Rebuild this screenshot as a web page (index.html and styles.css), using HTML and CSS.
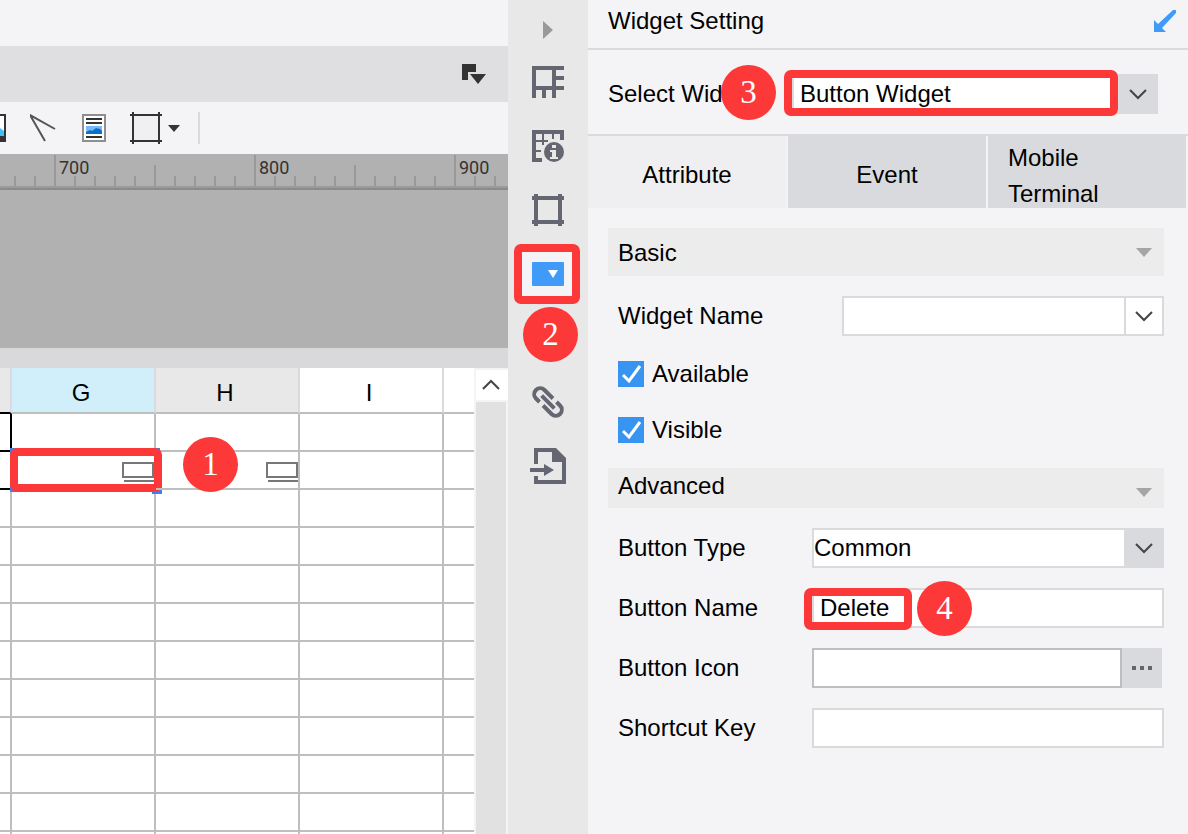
FILE: index.html
```html
<!DOCTYPE html>
<html lang="en">
<head>
    <meta charset="UTF-8">
    <meta name="viewport" content="width=device-width, initial-scale=1.0">
    <title>Widget Setting</title>
    <link rel="stylesheet" href="styles.css">
</head>
<body>
    <main class="designer">
        <div class="titlebar"></div>
        <div class="tabstrip">
            <button class="plain" aria-label="Open templates">
                <svg width="24" height="22" fill="#333"><path d="M0 1H14V9H6V17H0Z"/><path d="M8 11H24L16 21Z"/></svg>
            </button>
        </div>
        <div class="toolbar">
            <button class="plain" aria-label="Insert picture">
                <svg width="6" height="28"><path fill="#fff" d="M0 0H6V28H0Z"/><path fill="#40bfff" d="M0 14L4 17V22H0Z"/><path fill="#333" d="M0 0H6V28H0V22H4V2H0Z"/></svg>
            </button>
            <button class="plain" aria-label="Slope line">
                <svg width="28" height="28" fill="none" stroke="#555" stroke-width="2"><path d="M25 15L0 1L15 27"/></svg>
            </button>
            <button class="plain" aria-label="Rich text">
                <svg width="24" height="28"><path fill="#fff" stroke="#8f8f8f" stroke-width="2" d="M1 1H23V27H1Z"/><path fill="#333" d="M4 4H20V6H4ZM4 8H20V10H4ZM4 22H20V24H4Z"/><path fill="#74b9ff" d="M4 12H20V20H4Z"/><path fill="#0b70c4" d="M4 18L8 16L10 17L14 14L18 15L20 17V20H4Z"/></svg>
            </button>
            <button class="plain" aria-label="Border">
                <svg width="52" height="32" fill="none" stroke="#333" stroke-width="2"><path fill="#f0f0f2" stroke="none" d="M4 4H28V28H4Z"/><path d="M0 3H32M0 29H32M3 0V32M29 0V32"/><path fill="#333" stroke="none" d="M38 13H50L44 20Z"/></svg>
            </button>
            <span class="separator"></span>
        </div>
        <svg class="ruler" width="100%" height="36" aria-label="Ruler">
            <defs>
                <pattern id="ticks" x="54" width="200" height="36" patternUnits="userSpaceOnUse">
                    <path fill="#999" d="M0 1h2v31h-2zM20 22h2v10h-2zM40 22h2v10h-2zM60 22h2v10h-2zM80 22h2v10h-2zM100 11h2v21h-2zM120 22h2v10h-2zM140 22h2v10h-2zM160 22h2v10h-2zM180 22h2v10h-2z"/>
                </pattern>
            </defs>
            <rect width="100%" height="32" fill="url(#ticks)"/>
            <rect y="32" width="100%" height="2" fill="#9b9b9b"/>
            <rect y="34" width="100%" height="2" fill="#8b8b8b"/>
            <text x="59" y="20">700</text>
            <text x="259" y="20">800</text>
            <text x="459" y="20">900</text>
        </svg>
        <div class="canvas"></div>
        <div class="sheet">
            <table class="grid">
                <colgroup><col class="col-edge"><col class="col"><col class="col"><col class="col"><col></colgroup>
                <thead>
                    <tr><th class="shade dark-bottom"></th><th class="current">G</th><th class="shade">H</th><th>I</th><th></th></tr>
                </thead>
                <tbody>
                    <tr><td class="dark-bottom dark-right"></td><td></td><td></td><td></td><td></td></tr>
                    <tr>
                        <td class="dark-bottom dark-right"></td>
                        <td class="anchor">
                            <svg class="widget-mark" width="32" height="20" fill="#777"><path fill-rule="evenodd" d="M0 0H32V16H0ZM2 2V14H30V2ZM2 18H32V20H2Z"/></svg>
                            <span class="selection"></span>
                            <span class="mark mark-cell"></span>
                        </td>
                        <td class="anchor">
                            <svg class="widget-mark" width="32" height="20" fill="#777"><path fill-rule="evenodd" d="M0 0H32V16H0ZM2 2V14H30V2ZM2 18H32V20H2Z"/></svg>
                            <span class="step step-1">1</span>
                        </td>
                        <td></td><td></td>
                    </tr>
                    <tr><td></td><td></td><td></td><td></td><td></td></tr>
                    <tr><td></td><td></td><td></td><td></td><td></td></tr>
                    <tr><td></td><td></td><td></td><td></td><td></td></tr>
                    <tr><td></td><td></td><td></td><td></td><td></td></tr>
                    <tr><td></td><td></td><td></td><td></td><td></td></tr>
                    <tr><td></td><td></td><td></td><td></td><td></td></tr>
                    <tr><td></td><td></td><td></td><td></td><td></td></tr>
                    <tr><td></td><td></td><td></td><td></td><td></td></tr>
                    <tr><td></td><td></td><td></td><td></td><td></td></tr>
                    <tr><td></td><td></td><td></td><td></td><td></td></tr>
                </tbody>
            </table>
            <div class="scrollbar">
                <button class="plain scroll-up" aria-label="Scroll up">
                    <svg width="20" height="12" fill="none" stroke="#444" stroke-width="2"><path d="M1 10L9 2L17 10"/></svg>
                </button>
                <div class="scroll-track"></div>
            </div>
        </div>
    </main>

    <nav class="rail">
        <button class="plain rail-toggle" aria-label="Collapse panel">
            <svg width="12" height="20"><path fill="#999" d="M1 1L11 10L1 19Z"/></svg>
        </button>
        <button class="plain rail-item" aria-label="Cell element">
            <svg width="40" height="40"><path d="M4 4H36V8H28V14H36V18H28V24H36V28H28V36H24V28H18V36H14V28H8V36H4ZM8 8V24H24V8Z" fill-rule="evenodd"/></svg>
        </button>
        <button class="plain rail-item" aria-label="Cell attribute">
            <svg width="40" height="40"><path d="M4 4H36V14H32V8H26V13H24V8H16V14H20V16H16V19H14V16H8V24H13V26H8V32H14V36H4ZM8 8V14H14V8Z" fill-rule="evenodd"/><circle cx="26" cy="26" r="10"/><path fill="#e8e8e8" d="M24 19H28V22H24ZM22 24H28V31H30V33H22V31H24V26H22Z"/></svg>
        </button>
        <button class="plain rail-item" aria-label="Floating element">
            <svg width="40" height="40"><path d="M6 4H10V6H30V4H34V6H36V10H34V30H36V34H34V36H30V34H10V36H6V34H4V30H6V10H4V6H6ZM10 10V30H30V10Z" fill-rule="evenodd"/></svg>
        </button>
        <button class="plain rail-item anchor" aria-label="Widget setting">
            <span class="mark mark-rail"></span>
            <svg class="over" width="40" height="40"><rect x="4" y="8" width="32" height="24" rx="1" fill="#409bf8"/><path fill="#fff" d="M20 16H30L25 24Z"/></svg>
            <span class="step step-2">2</span>
        </button>
        <span class="rail-item"></span>
        <button class="plain rail-item" aria-label="Hyperlink">
            <svg width="40" height="40"><g transform="translate(20 20) rotate(45)" fill="none" stroke="#646771" stroke-width="4"><path d="M1 -6H-11A6 6 0 0 0 -11 6H-6M-1 6H11A6 6 0 0 0 11 -6H6M-9 0H9"/></g></svg>
        </button>
        <button class="plain rail-item" aria-label="Import">
            <svg width="40" height="40"><path d="M6 2H28L38 12V38H6V30H10V34H34V16H24V6H10V18H6ZM2 22H16V18L26 24L16 30V26H2Z"/></svg>
        </button>
    </nav>

    <aside class="panel">
        <header class="panel-head">
            <span>Widget Setting</span>
            <button class="plain" aria-label="Dock panel">
                <svg width="24" height="24"><path fill="#409bf8" d="M2 11L6 15L21 1H24V4L10 19L14 23H2Z"/></svg>
            </button>
        </header>
        <div class="picker anchor">
            <label for="widget">Select Widget</label>
            <span class="combo anchor">
                <select id="widget"><option>Button Widget</option></select>
                <svg class="arrow filled" width="40" height="40"><path d="M12 16L20 24L28 16"/></svg>
                <span class="mark mark-picker"></span>
            </span>
            <span class="step step-3">3</span>
        </div>
        <div class="tabs">
            <button class="tab active">Attribute</button>
            <button class="tab">Event</button>
            <button class="tab tab-long">Mobile Terminal</button>
        </div>
        <form class="form">
            <h2 class="section">Basic <svg width="16" height="10"><path d="M0 0H16L8 9Z"/></svg></h2>
            <div class="fields">
                <div class="field field-name">
                    <label for="wname">Widget Name</label>
                    <span class="combo anchor">
                        <input id="wname" type="text">
                        <svg class="arrow" width="40" height="40"><path class="divider" d="M1 0V40"/><path d="M12 16L20 24L28 16"/></svg>
                    </span>
                </div>
                <label class="check"><input type="checkbox" checked>Available</label>
                <label class="check"><input type="checkbox" checked>Visible</label>
            </div>
            <h2 class="section section-low">Advanced <svg width="16" height="12"><path d="M0 0H16L8 9Z"/></svg></h2>
            <div class="fields">
                <div class="field">
                    <label for="btype">Button Type</label>
                    <span class="combo anchor">
                        <select id="btype" class="tight"><option>Common</option></select>
                        <svg class="arrow filled" width="40" height="40"><path d="M12 16L20 24L28 16"/></svg>
                    </span>
                </div>
                <div class="field">
                    <label for="bname">Button Name</label>
                    <span class="combo anchor">
                        <input id="bname" type="text" value="Delete">
                        <span class="mark mark-name"></span>
                        <span class="step step-4">4</span>
                    </span>
                </div>
                <div class="field">
                    <label for="bicon">Button Icon</label>
                    <span class="combo combo-icon">
                        <input id="bicon" class="strong" type="text">
                        <button type="button" class="browse" aria-label="Browse">
                            <svg width="22" height="4" fill="#666"><path d="M1 0h4v4h-4zM9 0h4v4h-4zM17 0h4v4h-4z"/></svg>
                        </button>
                    </span>
                </div>
                <div class="field">
                    <label for="bkey">Shortcut Key</label>
                    <span class="combo"><input id="bkey" type="text"></span>
                </div>
            </div>
        </form>
    </aside>
</body>
</html>
```
FILE: styles.css
```css
*{box-sizing:border-box;}

body{
  --red:#fc3838;
  --line:#dadadc;
  --fill:#d9dade;
  margin:0;
  height:100vh;
  display:flex;
  overflow:hidden;
  background:#f4f4f7;
  color:#000;
  font:24px/28px "Liberation Sans", Arial, sans-serif;
}
svg{display:block;}
button, input, select{font:inherit; color:inherit; margin:0;}
.plain{border:0; padding:0; background:none;}
.anchor{position:relative;}

/* red frames and numbered steps */
.mark{
  position:absolute;
  border:8px solid var(--red);
  border-radius:7px;
  pointer-events:none;
}
.step{
  position:absolute;
  width:55px;
  height:55px;
  border-radius:50%;
  background:var(--red);
  color:#fff;
  font:33px/54px "Liberation Serif", "Times New Roman", serif;
  text-align:center;
}
.mark-cell{left:-2px; top:-4px; width:152px; height:44px;}
.mark-rail{left:6px; top:2px; width:66px; height:60px; background:#f4f4f7;}
.mark-picker{left:-8px; right:40px; top:-4px; height:46px;}
.mark-name{left:-8px; top:0; width:108px; height:42px;}
.step-1{left:27px; top:-15px;}
.step-2{left:15px; top:65px;}
.step-3{left:133px; top:15px;}
.step-4{left:105px; top:-7px;}

/* designer */
.designer{
  flex:1;
  min-width:0;
  display:flex;
  flex-direction:column;
}
.titlebar{height:46px; flex:none;}
.tabstrip{
  flex:none;
  height:56px;
  padding-right:22px;
  display:flex;
  align-items:center;
  justify-content:flex-end;
  background:#dfdfe1;
}
.toolbar{
  flex:none;
  height:52px;
  display:flex;
  align-items:center;
  gap:24px;
}
.separator{width:2px; height:32px; margin-left:-8px; background:var(--line);}
.ruler{
  flex:none;
  background:#b1b1b1;
  fill:#333;
  font:18px Roboto, sans-serif;
}
.canvas{
  flex:none;
  height:178px;
  background:#b1b1b1;
  border-bottom:20px solid #d9d9db;
}
.sheet{
  flex:1;
  min-height:0;
  display:flex;
  align-items:flex-start;
  overflow:hidden;
}
.grid{
  flex:1;
  min-width:0;
  table-layout:fixed;
  border-spacing:0;
  background:#fff;
}
.col-edge{width:12px;}
.col{width:144px;}
.grid th, .grid td{
  height:38px;
  padding:0;
  border:0 solid #bebebe;
  border-width:0 2px 2px 0;
  vertical-align:bottom;
}
.grid th{
  height:46px;
  padding:5px 4px 0 0;
  border-right-color:#d9d9df;
  font-weight:normal;
  vertical-align:middle;
}
.grid th:last-child, .grid td:last-child{border-right:0;}
.grid .shade{background:#e8e8e8;}
.grid .current{background:#d0effb;}
.grid .dark-bottom{border-bottom-color:#000;}
.grid .dark-right{border-right-color:#000;}
.widget-mark{margin:0 0 6px auto;}
.selection{
  position:absolute;
  left:-2px;
  top:-4px;
  width:150px;
  height:44px;
  border:4px solid #3b82f0;
}
.selection::after{
  content:"";
  position:absolute;
  right:-6px;
  bottom:-6px;
  width:10px;
  height:10px;
  background:#3b82f0;
}
.scrollbar{
  align-self:stretch;
  width:34px;
  padding:2px 0 0 2px;
  display:flex;
  flex-direction:column;
  gap:2px;
}
.scroll-up{
  height:30px;
  display:flex;
  align-items:center;
  justify-content:center;
  background:#fff;
}
.scroll-track{flex:1; margin-right:2px; background:#e1e1e1;}

/* rail */
.rail{
  flex:none;
  width:80px;
  display:flex;
  flex-direction:column;
  background:#e8e8e8;
}
.rail-toggle{
  height:50px;
  padding-top:10px;
  display:flex;
  align-items:center;
  justify-content:center;
}
.rail-item{
  height:64px;
  display:flex;
  align-items:center;
  justify-content:center;
  fill:#646771;
}
.over{position:relative;}

/* panel */
.panel{flex:none; width:600px;}
.panel-head{
  height:50px;
  padding:0 12px 6px 20px;
  display:flex;
  align-items:center;
  justify-content:space-between;
  border-bottom:2px solid var(--line);
}
.picker{
  padding:24px 30px 20px 20px;
  display:grid;
  grid-template-columns:184px 1fr;
  align-items:center;
  border-bottom:2px solid var(--line);
}
.combo{display:flex; min-width:0;}
.combo input, .combo select{
  flex:1;
  min-width:0;
  height:40px;
  padding:0 6px;
  border:2px solid var(--line);
  border-radius:0;
  background:#fff;
  appearance:none;
}
.combo .tight{padding-left:0;}
.combo .strong{border-color:#bebebe;}
.arrow{
  position:absolute;
  right:0;
  top:0;
  fill:none;
  stroke:#444;
  stroke-width:2;
  pointer-events:none;
}
.filled{background:var(--fill);}
.divider{stroke:var(--line);}
.browse{
  width:40px;
  border:0;
  padding:0;
  display:flex;
  align-items:center;
  justify-content:center;
  background:var(--fill);
}
.combo-icon{padding-right:2px;}

.tabs{
  padding-right:2px;
  display:grid;
  grid-template-columns:repeat(3, 1fr);
  grid-template-rows:72px;
  gap:2px;
}
.tab{
  border:0;
  padding:6px 4px 0;
  background:var(--fill);
}
.tab.active{background:#efeff2;}
.tab-long{padding:4px 60px 0 20px; line-height:36px; text-align:left;}

.form{padding:20px 24px 20px 20px;}
.section{
  margin:0;
  height:48px;
  padding:2px 12px 0 10px;
  display:flex;
  align-items:center;
  justify-content:space-between;
  background:#ececec;
  font:inherit;
  fill:#a5a5a5;
}
.section-low{
  height:40px;
  padding:4px 12px 8px 10px;
  align-items:flex-end;
}
.fields{
  padding:20px 0 20px 10px;
  display:flex;
  flex-direction:column;
  gap:20px;
}
.field{
  display:grid;
  grid-template-columns:194px 1fr;
  align-items:center;
}
.field-name{grid-template-columns:224px 1fr;}
.check{
  height:36px;
  display:flex;
  align-items:center;
  gap:8px;
}
.check input{
  width:26px;
  height:26px;
  appearance:none;
  background:#3794f0 url("data:image/svg+xml,%3Csvg xmlns='http://www.w3.org/2000/svg' viewBox='0 0 26 26'%3E%3Cpath d='M5 14L11 20L22 5' fill='none' stroke='%23fff' stroke-width='3'/%3E%3C/svg%3E");
}
```
